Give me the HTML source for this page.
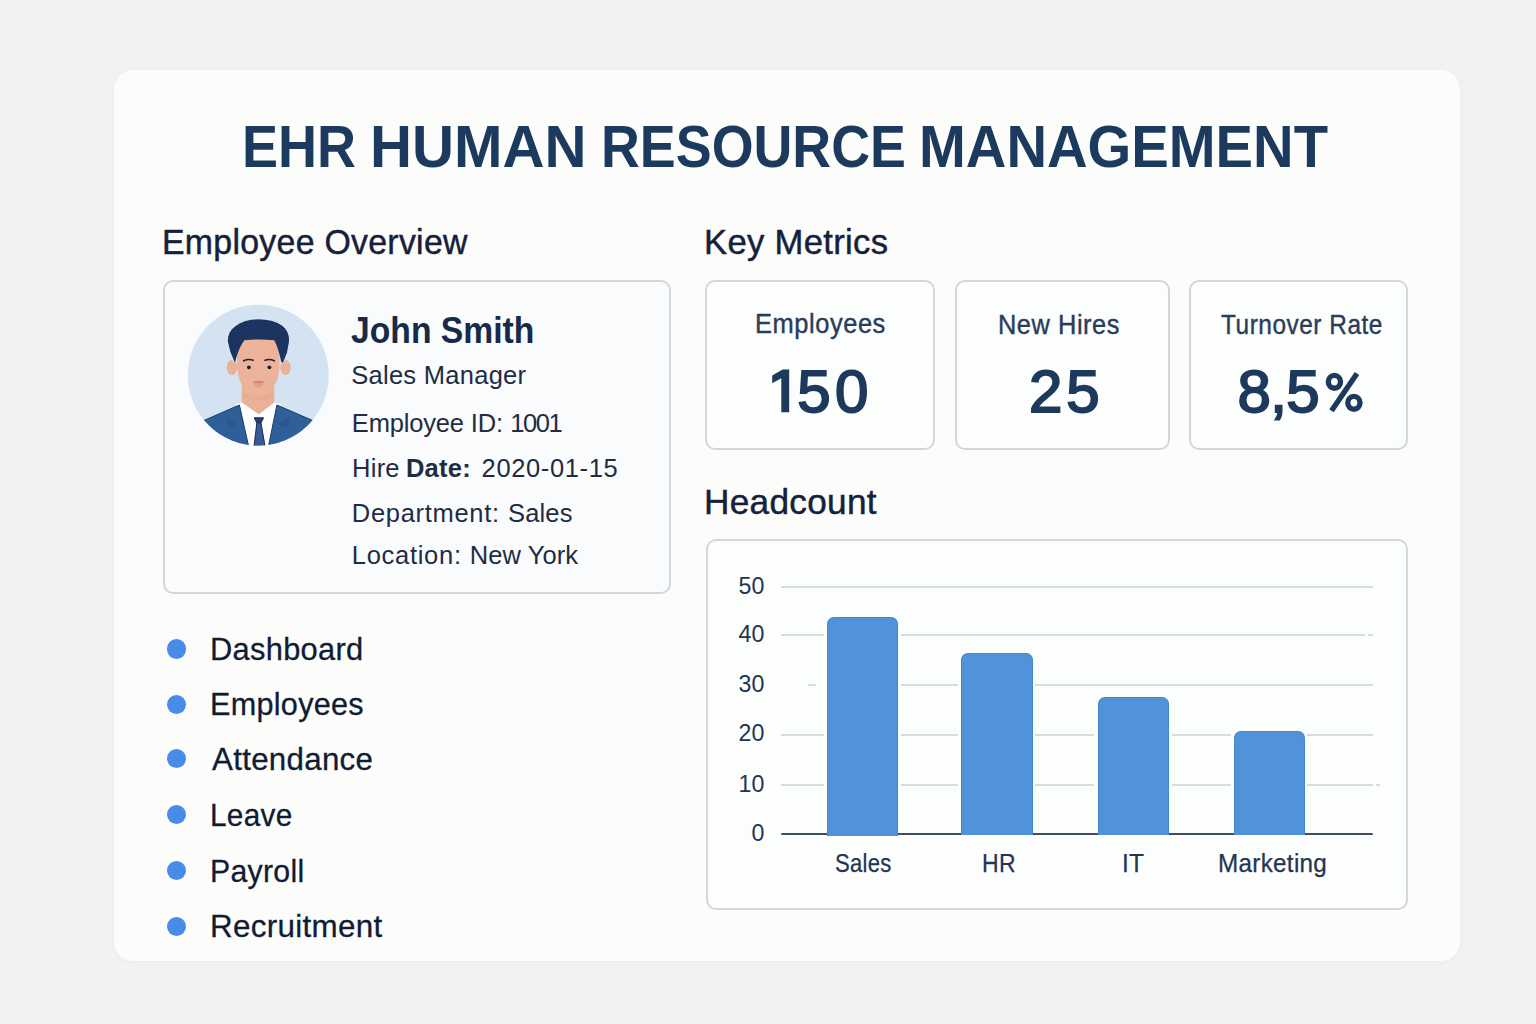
<!DOCTYPE html>
<html><head><meta charset="utf-8">
<style>
*{margin:0;padding:0;box-sizing:border-box}
html,body{width:1536px;height:1024px;overflow:hidden;background:#f3f2f0;font-family:"Liberation Sans",sans-serif}
.t{position:absolute;white-space:nowrap;line-height:1}
#card{position:absolute;left:114px;top:70px;width:1346px;height:891px;background:#fcfcfa;border-radius:19px;box-shadow:0 1px 6px rgba(0,0,0,0.035)}
.title{font-weight:bold;color:#1c3a5e}
.h2{color:#15213b;-webkit-text-stroke:0.45px #15213b}
.emp{position:absolute;left:162.5px;top:280px;width:508px;height:314px;border:2px solid #d3d7dc;border-radius:10px;background:#f9fbfd}
.name{font-weight:bold;color:#172a48}
.det{color:#1f2c42}
.mcard{position:absolute;top:279.5px;height:170px;border:2px solid #d3d7dc;border-radius:10px;background:#fcfdfd}
.mlabel{color:#2a3d58;-webkit-text-stroke:0.4px #2a3d58}
.mnum{color:#1d3a5c;-webkit-text-stroke:2px #1d3a5c}
.chart{position:absolute;left:705.5px;top:539px;width:702.5px;height:371px;border:2px solid #d3d7dc;border-radius:10px;background:#fcfdfd}
.grid{position:absolute;height:2px;background:#d9dcdf}
.axis{position:absolute;left:781px;width:592px;height:2.8px;background:#3f4e64;border-radius:1.5px}
.bar{position:absolute;background:#5193d8;border:1px solid #4784d0;border-bottom:none;border-radius:7px 7px 0 0}
.ylab{font-size:23.2px;color:#233450;text-align:right;left:713px;width:51.4px}
.xlab{color:#24354f;-webkit-text-stroke:0.25px #24354f}
.dot{position:absolute;left:166.8px;width:19.2px;height:19.2px;border-radius:50%;background:#4a8be9}
.nav{color:#111c33;-webkit-text-stroke:0.3px #111c33}
</style></head><body>
<div id="card"></div>
<div class="t title" style="left:241.57px;top:116.6px;font-size:59.6px;letter-spacing:0px;transform:scaleX(0.9067);transform-origin:0 0;">EHR</div>

<div class="t title" style="left:370.2px;top:116.6px;font-size:59.6px;letter-spacing:0px;transform:scaleX(0.9762);transform-origin:0 0;">HUMAN</div>

<div class="t title" style="left:600.9px;top:116.6px;font-size:59.6px;letter-spacing:0px;transform:scaleX(0.9030);transform-origin:0 0;">RESOURCE</div>

<div class="t title" style="left:919.1px;top:116.6px;font-size:59.6px;letter-spacing:0px;transform:scaleX(0.9431);transform-origin:0 0;">MANAGEMENT</div>

<div class="t h2" style="left:162.16px;top:225.3px;font-size:35.8px;letter-spacing:0.3px;transform:scaleX(0.9453);transform-origin:0 0;">Employee Overview</div>

<div class="emp"></div>
<svg style="position:absolute;left:180px;top:295px" width="160" height="160" viewBox="180 295 160 160">
<defs><clipPath id="cc"><circle cx="258.3" cy="375.2" r="70.5"/></clipPath></defs>
<circle cx="258.3" cy="375.2" r="70.5" fill="#d3e3f2"/>
<g clip-path="url(#cc)">
<path d="M241.8 378 L241.8 403 L258.9 414.4 L274.2 403 L274.2 378 Z" fill="#eab196"/>
<path d="M242 392 Q258 402 274 392 L274 396 Q258 404 242 396 Z" fill="#e3a68c" opacity="0.5"/>
<path d="M236 404 L241.8 402.6 L258.9 414.4 L274.2 402.6 L281 404 L272 450 L245 450 Z" fill="#ffffff"/>
<path d="M180 436 L204.6 420.2 L239.4 405 L248.8 447 L180 450 Z" fill="#2f5f99" stroke="#1d3a6e" stroke-width="1"/>
<path d="M336 436 L312 420.2 L276.9 405 L268.3 447 L336 450 Z" fill="#2f5f99" stroke="#1d3a6e" stroke-width="1"/>
<path d="M226.5 416 L227 424 L234 428 L238 424" fill="#2b5690" stroke="none"/>
<path d="M290 416 L289.5 424 L282.5 428 L278.5 424" fill="#2b5690" stroke="none"/>
<path d="M256.9 422.5 L260.9 422.5 L265.2 447 L253.9 447 Z" fill="#3a5a95" stroke="#1a2a4e" stroke-width="1"/>
<path d="M254.2 417.8 L263.6 417.8 L261 422.8 L256.8 422.8 Z" fill="#2a3d6a" stroke="#1a2a4e" stroke-width="1" stroke-linejoin="round"/>
</g>
<ellipse cx="232" cy="367.5" rx="5.3" ry="7.5" fill="#eab196"/>
<ellipse cx="285.5" cy="367.5" rx="5.3" ry="7.5" fill="#eab196"/>
<path d="M236.9 336 L236.9 366 Q238 379 242.5 386 Q250 395 258.3 395.2 Q266.5 395 274 386 Q279 379 279.5 366 L279.5 336 Z" fill="#ecb39a"/>
<path d="M234.3 362.7 Q229 352 227.2 341 Q227.5 331 235 326 Q244 318.8 258 318.8 Q273 318.8 282 325 Q290 331 289.6 341 Q288.5 353 283.5 362.7 L281.3 361.9 Q278 347 274.3 340.3 Q259 338.5 244.4 340.3 Q239 347 235.1 361.9 Z" fill="#1b3560"/>
<path d="M234.3 362.7 Q229 352 227.2 341 Q227.5 331 235 326 Q244 318.8 258 318.8 Q273 318.8 282 325 Q290 331 289.6 341 Q288.5 353 283.5 362.7" fill="none" stroke="#eef4fa" stroke-width="0.9"/>
<path d="M243.6 360.8 Q248.3 358.6 253.2 360.2" fill="none" stroke="#22222c" stroke-width="1.6" stroke-linecap="round"/>
<path d="M265 360.2 Q269.7 358.6 274.3 360.8" fill="none" stroke="#22222c" stroke-width="1.6" stroke-linecap="round"/>
<circle cx="248.9" cy="367.3" r="1.9" fill="#1e1e28"/>
<circle cx="269.4" cy="367.3" r="1.9" fill="#1e1e28"/>
<path d="M253.6 382.6 Q258.6 384 263.6 382.6 Q263.2 387.3 258.6 387.5 Q254 387.3 253.6 382.6 Z" fill="#dea08a"/>
<path d="M252.3 382.2 Q255 380.3 258.6 381.1 Q262.2 380.3 265 382.2 Q258.6 384.2 252.3 382.2 Z" fill="#cf8b76"/>
</svg>

<div class="t name" style="left:351.3px;top:312.6px;font-size:36.3px;letter-spacing:0px;transform:scaleX(0.928);transform-origin:0 0;">John Smith</div>

<div class="t det" style="left:351.2px;top:362.9px;font-size:25.5px;letter-spacing:0.28px;">Sales Manager</div>

<div class="t det" style="left:351.8px;top:411.0px;font-size:25.5px;letter-spacing:-0.17px;">Employee ID:</div>

<div class="t det" style="left:510.3px;top:411.0px;font-size:25.5px;letter-spacing:-1.47px;">1001</div>

<div class="t det" style="left:352.1px;top:456.1px;font-size:25.5px;letter-spacing:0.23px;">Hire</div>

<div class="t det" style="left:405.9px;top:456.1px;font-size:25.5px;letter-spacing:0.28px;"><b>Date:</b></div>

<div class="t det" style="left:481.6px;top:456.1px;font-size:25.5px;letter-spacing:0.62px;">2020-01-15</div>

<div class="t det" style="left:351.8px;top:500.5px;font-size:25.5px;letter-spacing:0.69px;">Department:</div>

<div class="t det" style="left:508.0px;top:500.5px;font-size:25.5px;letter-spacing:0.15px;">Sales</div>

<div class="t det" style="left:351.8px;top:543.4px;font-size:25.5px;letter-spacing:0.71px;">Location:</div>

<div class="t det" style="left:469.7px;top:543.4px;font-size:25.5px;letter-spacing:0.09px;">New York</div>

<div class="t h2" style="left:704.28px;top:224.1px;font-size:35px;letter-spacing:0.3px;transform:scaleX(0.9904);transform-origin:0 0;">Key Metrics</div>

<div class="mcard" style="left:705px;width:229.5px"></div>
<div class="mcard" style="left:955px;width:215px"></div>
<div class="mcard" style="left:1189px;width:219px"></div>
<div class="t mlabel" style="left:754.72px;top:310.5px;font-size:27px;letter-spacing:0.6px;transform:scaleX(0.9419);transform-origin:0 0;">Employees</div>

<div class="t mlabel" style="left:998.16px;top:310.7px;font-size:27.5px;letter-spacing:0.6px;transform:scaleX(0.9225);transform-origin:0 0;">New Hires</div>

<div class="t mlabel" style="left:1221.0px;top:310.7px;font-size:27.5px;letter-spacing:0.6px;transform:scaleX(0.8873);transform-origin:0 0;">Turnover Rate</div>

<svg style="position:absolute;left:765px;top:362px" width="30" height="56" viewBox="765 362 30 56"><path d="M772.2 375.4 L782.6 369.5 L789.2 369.5 L789.2 412.2 L781.3 412.2 L781.3 378.2 L772.2 383.2 Z" fill="#1d3a5c"/></svg>
<div class="t mnum" style="left:797.2px;top:361.5px;font-size:60px;letter-spacing:4.5px;">50</div>

<div class="t mnum" style="left:1029px;top:361.5px;font-size:60px;letter-spacing:4px;">25</div>

<div class="t mnum" style="left:1237.6px;top:361.5px;font-size:60px;letter-spacing:-0.65px;">8,5</div>

<svg style="position:absolute;left:1320px;top:366px" width="50" height="52" viewBox="1320 366 50 52"><g fill="none" stroke="#1d3a5c" stroke-width="5.4"><ellipse cx="1334.4" cy="381.8" rx="6.1" ry="6.4"/><ellipse cx="1353.9" cy="402.8" rx="6.1" ry="6.4"/><line x1="1331.5" y1="410.8" x2="1357" y2="373.4"/></g></svg>
<div class="t h2" style="left:704.06px;top:485.1px;font-size:35.9px;letter-spacing:0.3px;transform:scaleX(0.9803);transform-origin:0 0;">Headcount</div>

<div class="chart"></div>
<div class="grid" style="top:585.6px;left:781.3px;width:591.4px"></div>
<div class="grid" style="top:633.9px;left:781.3px;width:42.5px"></div>
<div class="grid" style="top:633.9px;left:1368px;width:4.7px"></div>
<div class="grid" style="top:633.9px;left:900.5px;width:464.5px"></div>
<div class="grid" style="top:683.8px;left:808.0px;width:8.0px"></div>
<div class="grid" style="top:683.8px;left:900.5px;width:57.8px"></div>
<div class="grid" style="top:683.8px;left:1035.4px;width:337.3px"></div>
<div class="grid" style="top:733.8px;left:781.3px;width:42.5px"></div>
<div class="grid" style="top:733.8px;left:900.5px;width:57.8px"></div>
<div class="grid" style="top:733.8px;left:1035.4px;width:59.1px"></div>
<div class="grid" style="top:733.8px;left:1171.5px;width:59.3px"></div>
<div class="grid" style="top:733.8px;left:1307.1px;width:65.6px"></div>
<div class="grid" style="top:783.6px;left:781.3px;width:42.5px"></div>
<div class="grid" style="top:783.6px;left:900.5px;width:57.8px"></div>
<div class="grid" style="top:783.6px;left:1035.4px;width:59.1px"></div>
<div class="grid" style="top:783.6px;left:1171.5px;width:59.3px"></div>
<div class="grid" style="top:783.6px;left:1376px;width:4px"></div>
<div class="grid" style="top:783.6px;left:1307.1px;width:65.6px"></div>
<div class="axis" style="top:832.5px"></div>
<div class="bar" style="left:826.8px;top:616.5px;width:71.5px;height:219.0px"></div>
<div class="bar" style="left:961.3px;top:653.2px;width:71.9px;height:182.3px"></div>
<div class="bar" style="left:1097.5px;top:697.1px;width:71.8px;height:138.4px"></div>
<div class="bar" style="left:1233.8px;top:730.6px;width:71.1px;height:104.9px"></div>
<div class="t ylab" style="top:574.6px">50</div>
<div class="t ylab" style="top:623.1px">40</div>
<div class="t ylab" style="top:672.9px">30</div>
<div class="t ylab" style="top:722.4px">20</div>
<div class="t ylab" style="top:772.6px">10</div>
<div class="t ylab" style="top:821.9px">0</div>

<div class="t xlab" style="left:834.53px;top:850.7px;font-size:25.3px;letter-spacing:0.3px;transform:scaleX(0.8714);transform-origin:0 0;">Sales</div>

<div class="t xlab" style="left:981.58px;top:850.7px;font-size:25.3px;letter-spacing:0.3px;transform:scaleX(0.9091);transform-origin:0 0;">HR</div>

<div class="t xlab" style="left:1121.56px;top:850.7px;font-size:25.3px;letter-spacing:0.3px;transform:scaleX(0.97);transform-origin:0 0;">IT</div>

<div class="t xlab" style="left:1217.58px;top:850.7px;font-size:25.3px;letter-spacing:0.3px;transform:scaleX(0.9591);transform-origin:0 0;">Marketing</div>

<div class="dot" style="top:639.4px"></div>
<div class="dot" style="top:694.5px"></div>
<div class="dot" style="top:748.8px"></div>
<div class="dot" style="top:805.0px"></div>
<div class="dot" style="top:860.6999999999999px"></div>
<div class="dot" style="top:916.6999999999999px"></div>
<div class="t nav" style="left:210.26px;top:633.9px;font-size:31.8px;letter-spacing:0.3px;transform:scaleX(0.9701);transform-origin:0 0;">Dashboard</div>
<div class="t nav" style="left:209.88px;top:688.9px;font-size:31.8px;letter-spacing:0.3px;transform:scaleX(0.9618);transform-origin:0 0;">Employees</div>
<div class="t nav" style="left:211.8px;top:743.6px;font-size:31.8px;letter-spacing:0.3px;transform:scaleX(0.984);transform-origin:0 0;">Attendance</div>
<div class="t nav" style="left:209.93px;top:799.7px;font-size:31.8px;letter-spacing:0.3px;transform:scaleX(0.9365);transform-origin:0 0;">Leave</div>
<div class="t nav" style="left:209.9px;top:856.0px;font-size:31.8px;letter-spacing:0.3px;transform:scaleX(0.9516);transform-origin:0 0;">Payroll</div>
<div class="t nav" style="left:209.83px;top:911.0px;font-size:31.8px;letter-spacing:0.3px;transform:scaleX(0.9872);transform-origin:0 0;">Recruitment</div>
</body></html>
